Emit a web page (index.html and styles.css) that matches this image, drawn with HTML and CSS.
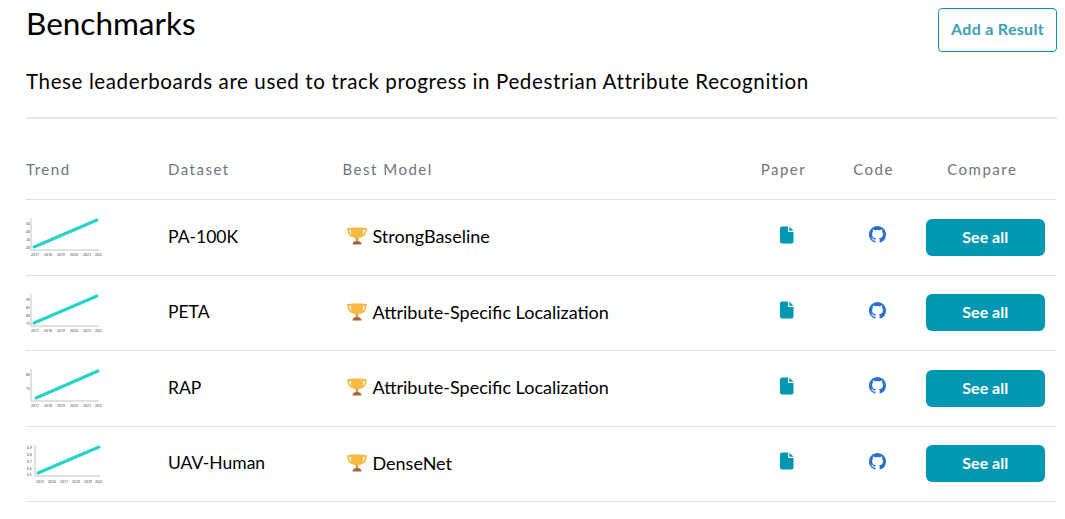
FILE: index.html
```html
<!DOCTYPE html>
<html lang="en">
<head>
    <meta charset="UTF-8">
    <title>Benchmarks</title>
    <link rel="stylesheet" href="styles.css">
</head>
<body>
    <svg class="defs" width="0" height="0">
        <symbol id="trophy" viewBox="0 0 20 18">
            <path d="M4.500 2H1.200C1.200 6.500 3 9 7 10" fill="none" stroke="#f5b942" stroke-width="1.800"/>
            <path d="M15.500 2h3.300C18.800 6.500 17 9 13 10" fill="none" stroke="#f5b942" stroke-width="1.800"/>
            <path d="M4 .5h12v4.500c0 4-2.500 6.500-6 6.500s-6-2.500-6-6.500z" fill="#f7bb45"/>
            <rect x="8.800" y="11" width="2.400" height="3.500" fill="#dc9a35"/>
            <path d="M5.500 17.500c0-2.500 1.800-3.500 4.500-3.500s4.500 1 4.500 3.500z" fill="#a5603f"/>
        </symbol>
        <symbol id="paper" viewBox="0 0 14 18">
            <path d="M2 .5h6v5.500h5.500v9.500a2 2 0 0 1-2 2H2a2 2 0 0 1-2-2V2.500a2 2 0 0 1 2-2zM9.300 .5l4.200 4.300H9.300z" fill="#0097b2"/>
        </symbol>
        <symbol id="github" viewBox="0 0 16 16">
            <path fill="#2b6fd1" d="M8 0C3.580 0 0 3.580 0 8c0 3.540 2.290 6.530 5.470 7.590.4.070.55-.17.55-.38 0-.19-.01-.82-.01-1.490-2.010.37-2.530-.49-2.690-.94-.09-.23-.48-.94-.82-1.130-.28-.15-.68-.52-.01-.53.630-.01 1.080.58 1.230.82.720 1.210 1.870.87 2.330.66.070-.52.280-.87.510-1.070-1.780-.2-3.640-.89-3.640-3.950 0-.87.310-1.590.82-2.150-.08-.2-.36-1.020.08-2.120 0 0 .67-.21 2.200.82.640-.18 1.320-.27 2-.27s1.360.09 2 .27c1.530-1.040 2.200-.82 2.200-.82.440 1.100.16 1.920.08 2.120.51.560.82 1.270.82 2.150 0 3.070-1.870 3.750-3.650 3.950.29.250.54.730.54 1.480 0 1.070-.01 1.930-.01 2.200 0 .21.150.46.550.38A8.010 8.010 0 0 0 16 8c0-4.420-3.580-8-8-8z"/>
        </symbol>
    </svg>

    <main class="page">
        <div class="title-row">
            <h2>Benchmarks</h2>
            <a class="add-btn" href="#">Add a Result</a>
        </div>
        <p class="intro">These leaderboards are used to track progress in Pedestrian Attribute Recognition</p>

        <div class="row head">
            <div>Trend</div>
            <div>Dataset</div>
            <div>Best Model</div>
            <div class="center">Paper</div>
            <div class="center">Code</div>
            <div class="center compare">Compare</div>
        </div>

        <div class="row">
            <svg class="trend" viewBox="0 0 76 40">
                <path class="axis" d="M5 1V33H73"/>
                <text x="0" y="8">50</text><text x="0" y="16">40</text><text x="0" y="24">30</text><text x="0" y="32">20</text>
                <text x="5" y="38.500">2017</text><text x="18" y="38.500">2018</text><text x="31" y="38.500">2019</text><text x="44" y="38.500">2020</text><text x="57" y="38.500">2021</text><text x="69" y="38.500">2022</text>
                <path class="line" d="M8 30L71 3"/>
            </svg>
            <div class="dataset">PA-100K</div>
            <div class="model"><svg class="trophy"><use href="#trophy"/></svg>StrongBaseline</div>
            <div class="center"><svg class="paper"><use href="#paper"/></svg></div>
            <div class="center"><svg class="github"><use href="#github"/></svg></div>
            <div class="center"><a class="see-btn" href="#">See all</a></div>
        </div>

        <div class="row">
            <svg class="trend" viewBox="0 0 76 40">
                <path class="axis" d="M5 1V33H73"/>
                <text x="0" y="8">90</text><text x="0" y="16">85</text><text x="0" y="24">80</text><text x="0" y="32">75</text>
                <text x="5" y="38.500">2017</text><text x="18" y="38.500">2018</text><text x="31" y="38.500">2019</text><text x="44" y="38.500">2020</text><text x="57" y="38.500">2021</text><text x="69" y="38.500">2022</text>
                <path class="line" d="M8 30L71 3"/>
            </svg>
            <div class="dataset">PETA</div>
            <div class="model"><svg class="trophy"><use href="#trophy"/></svg>Attribute-Specific Localization</div>
            <div class="center"><svg class="paper"><use href="#paper"/></svg></div>
            <div class="center"><svg class="github"><use href="#github"/></svg></div>
            <div class="center"><a class="see-btn" href="#">See all</a></div>
        </div>

        <div class="row">
            <svg class="trend" viewBox="0 0 76 40">
                <path class="axis" d="M5 1V33H73"/>
                <text x="0" y="8">80</text><text x="0" y="22">75</text>
                <text x="5" y="38.500">2017</text><text x="18" y="38.500">2018</text><text x="31" y="38.500">2019</text><text x="44" y="38.500">2020</text><text x="57" y="38.500">2021</text><text x="69" y="38.500">2022</text>
                <path class="line" d="M10 30L72 3"/>
            </svg>
            <div class="dataset">RAP</div>
            <div class="model"><svg class="trophy"><use href="#trophy"/></svg>Attribute-Specific Localization</div>
            <div class="center"><svg class="paper"><use href="#paper"/></svg></div>
            <div class="center"><svg class="github"><use href="#github"/></svg></div>
            <div class="center"><a class="see-btn" href="#">See all</a></div>
        </div>

        <div class="row">
            <svg class="trend" viewBox="0 0 76 40">
                <path class="axis" d="M9 1V32H74"/>
                <text x="1" y="5">0.9</text><text x="1" y="12">0.8</text><text x="1" y="19">0.7</text><text x="1" y="26">0.6</text><text x="1" y="32">0.5</text>
                <text x="10" y="38.500">2015</text><text x="22" y="38.500">2016</text><text x="34" y="38.500">2017</text><text x="46" y="38.500">2018</text><text x="58" y="38.500">2019</text><text x="69" y="38.500">2020</text>
                <path class="line" d="M12 29L73 3"/>
            </svg>
            <div class="dataset">UAV-Human</div>
            <div class="model"><svg class="trophy"><use href="#trophy"/></svg>DenseNet</div>
            <div class="center"><svg class="paper"><use href="#paper"/></svg></div>
            <div class="center"><svg class="github"><use href="#github"/></svg></div>
            <div class="center"><a class="see-btn" href="#">See all</a></div>
        </div>
    </main>
</body>
</html>
```

FILE: styles.css
```css
body {
    margin: 0;
    background: #fff;
    color: #000;
    font-family: 'Lato', sans-serif;
    overflow: hidden;
}

a {
    text-decoration: none;
}

.defs {
    display: block;
}

.page {
    padding: 8px 8px 0 26px;
}

.title-row {
    display: flex;
    justify-content: space-between;
    align-items: flex-start;
}

h2 {
    margin: 0;
    font-size: 31.500px;
    font-weight: 400;
    line-height: 31px;
}

.add-btn {
    box-sizing: border-box;
    width: 119px;
    height: 44px;
    line-height: 40px;
    text-align: center;
    border: 1px solid #0097b2;
    border-radius: 4px;
    color: #3b9fb5;
    font-size: 16px;
    font-weight: 700;
    letter-spacing: 0.3px;
}

.intro {
    margin: 14px 0 0;
    padding-bottom: 21px;
    border-bottom: 2px solid #e4e6e8;
    font-size: 20.600px;
    line-height: 30px;
    letter-spacing: 0.580px;
}

.row {
    display: grid;
    grid-template-columns: 142px 174.500px 391px 100px 80px 1fr;
    align-items: center;
    height: 75.500px;
    box-sizing: border-box;
    border-bottom: 1px solid #dee2e6;
    font-size: 18px;
}

.head {
    height: 81px;
    padding-top: 19px;
    color: #6c757d;
    font-size: 15px;
    letter-spacing: 1.500px;
}

.center {
    display: flex;
    justify-content: center;
}

.compare {
    padding-right: 6px;
}

.trend {
    display: block;
    width: 76px;
    height: 40px;
    filter: blur(0.500px);
}

.trend text {
    font-size: 3.500px;
    fill: #555;
}

.axis {
    fill: none;
    stroke: #d8d8d8;
    stroke-width: 1.500px;
}

.line {
    fill: none;
    stroke: #26d3ca;
    stroke-width: 3px;
    stroke-linecap: round;
}

.dataset {
    font-size: 17.500px;
    padding-bottom: 2px;
}

.model {
    display: flex;
    align-items: center;
    margin-left: 4px;
    padding-bottom: 2px;
}

.trophy {
    width: 20px;
    height: 18px;
    margin-right: 6px;
}

.paper {
    width: 14px;
    height: 18px;
    margin: 0 0 5px 6px;
}

.github {
    width: 17px;
    height: 17px;
    margin: 0 0 5px 7px;
}

.see-btn {
    display: block;
    width: 119px;
    height: 37px;
    line-height: 35px;
    text-align: center;
    background: #0097b2;
    border-radius: 6px;
    color: #fff;
    font-size: 16px;
    font-weight: 700;
}
```
